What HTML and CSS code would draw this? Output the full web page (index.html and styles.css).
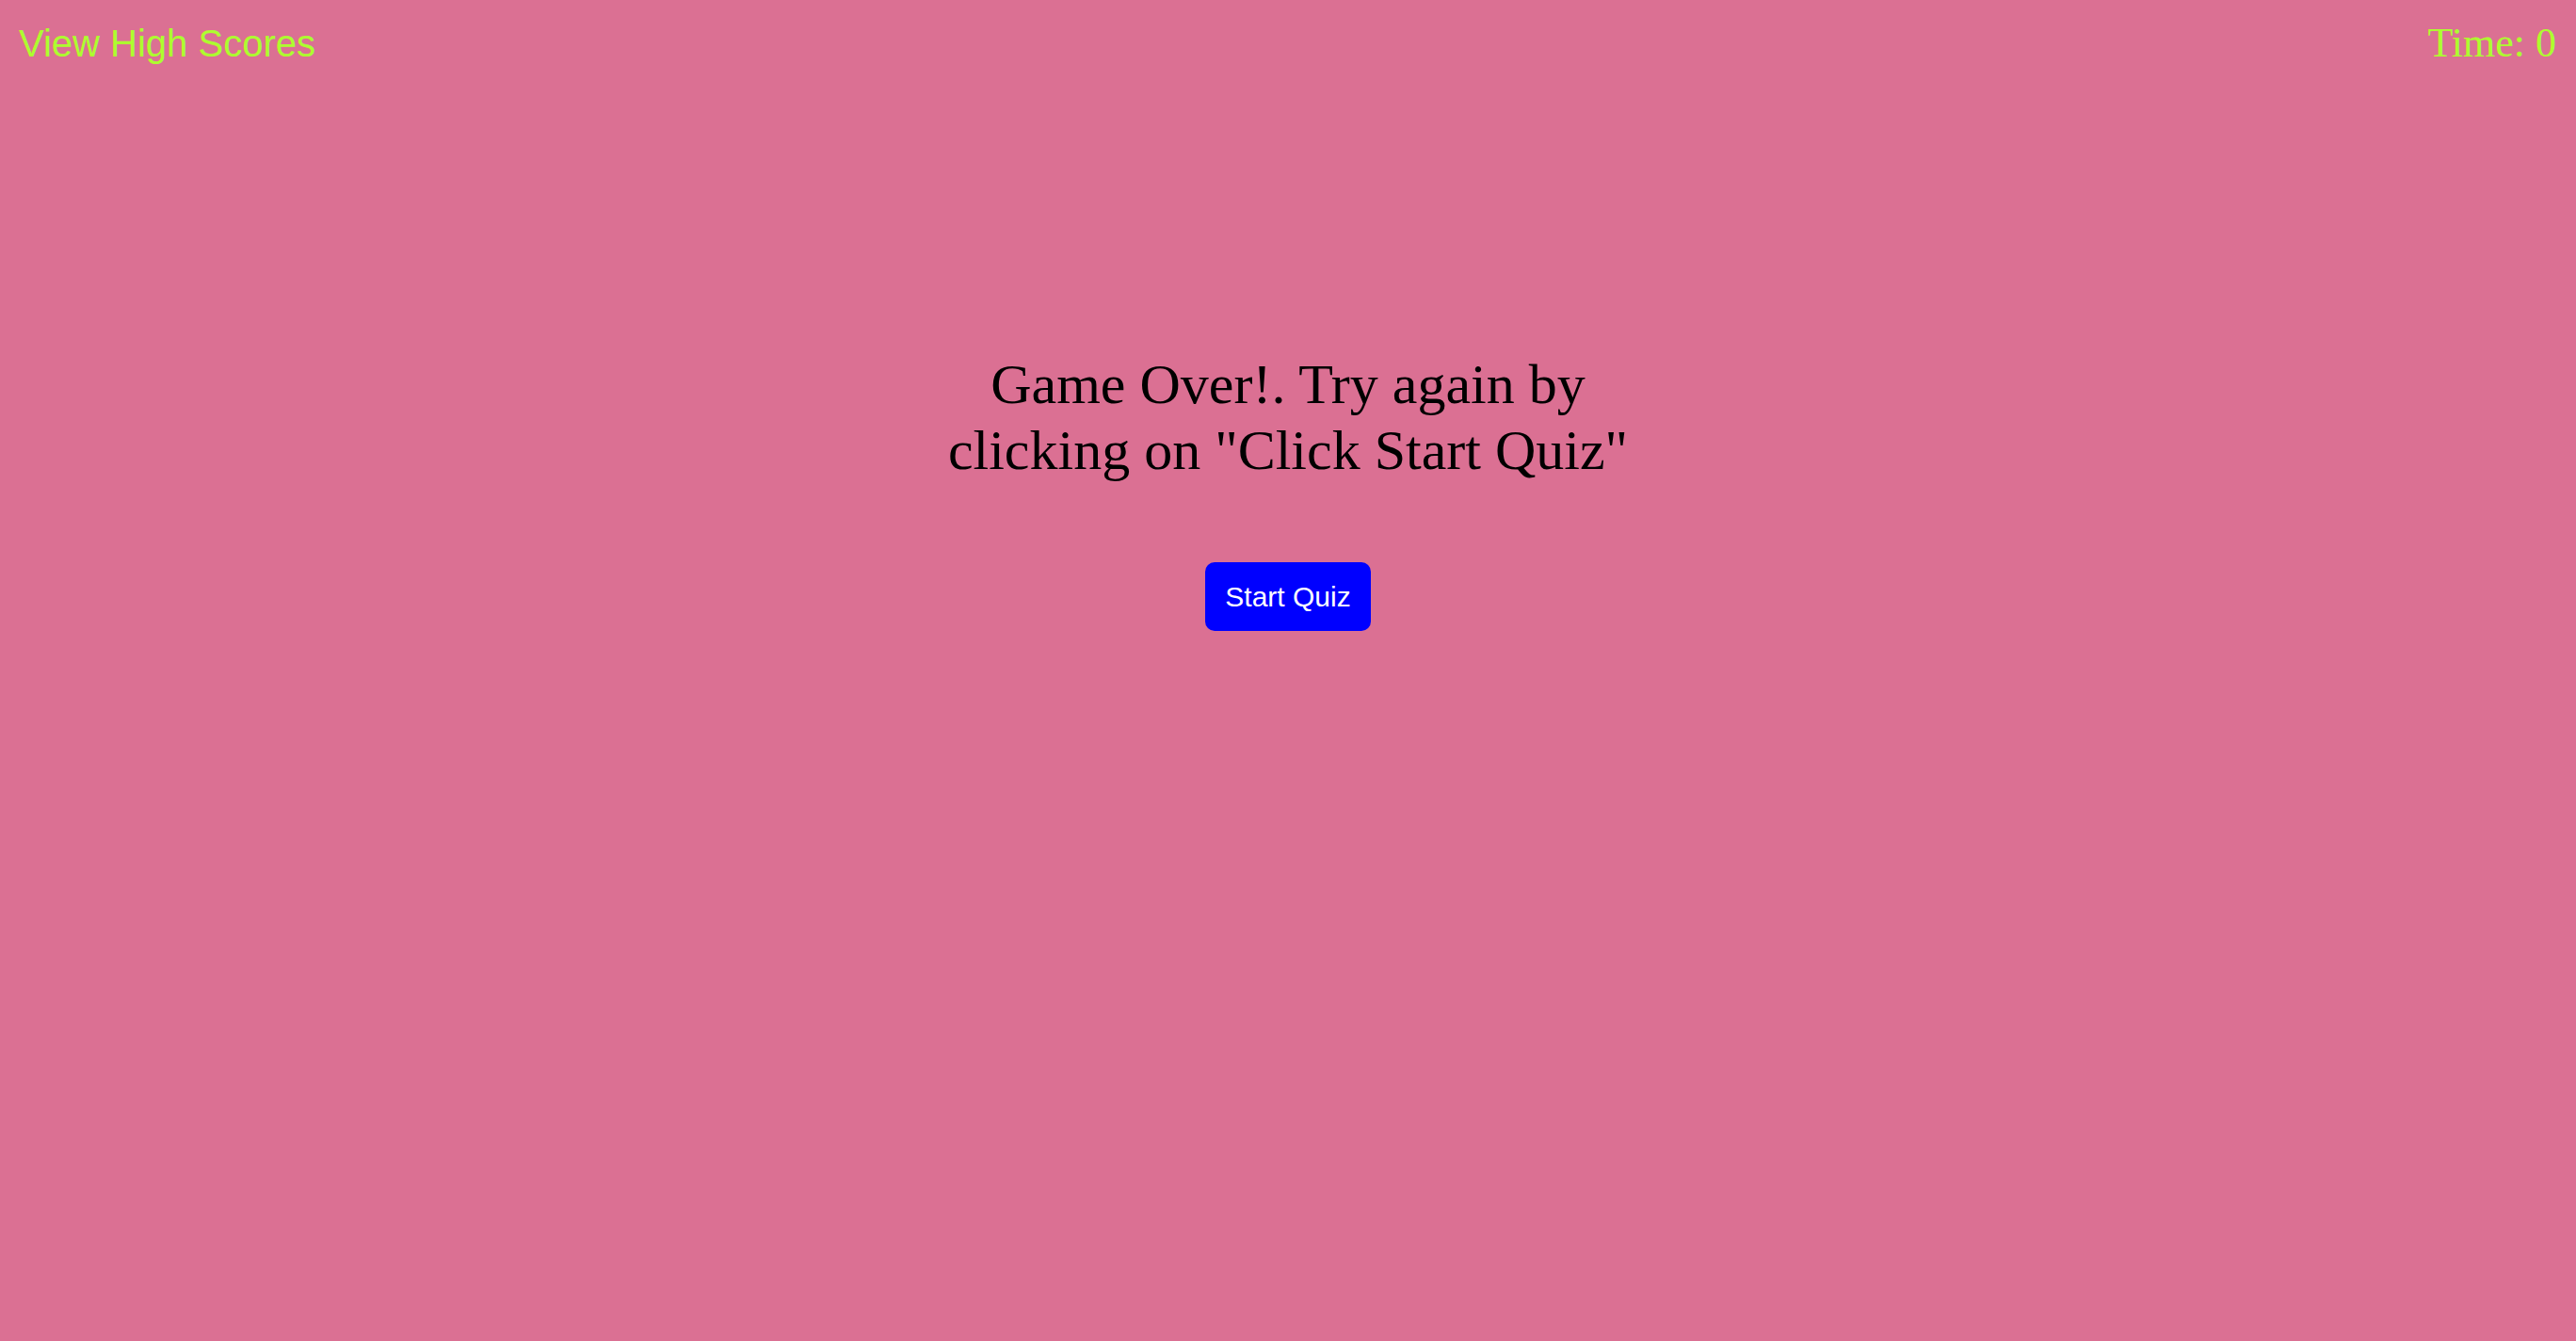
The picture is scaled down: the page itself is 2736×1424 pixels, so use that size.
FILE: index.html
```html
<!DOCTYPE html>
<html lang="en">
<head>
<meta charset="utf-8">
<title>Code Quiz</title>
<link rel="stylesheet" href="styles.css">
</head>
<body>
<header class="top-bar">
  <a class="high-scores" href="#">View High Scores</a>
  <div class="timer">Time: 0</div>
</header>
<main class="quiz">
  <h1 class="message">Game Over!. Try again by clicking on "Click Start Quiz"</h1>
  <button class="start-btn" type="button">Start Quiz</button>
</main>
</body>
</html>
```

FILE: styles.css
```css
html, body {
  margin: 0;
  padding: 0;
}

body {
  background: #db7093;
  min-height: 100vh;
  font-family: "Liberation Serif", "Times New Roman", serif;
}

.top-bar {
  display: flex;
  justify-content: space-between;
  align-items: baseline;
  padding: 23px 21px 0 20px;
}

.high-scores {
  font-family: "Liberation Sans", Arial, sans-serif;
  font-size: 40px;
  line-height: 45px;
  color: #adff2f;
  text-decoration: none;
}

.timer {
  font-family: "Liberation Serif", "Times New Roman", serif;
  font-size: 44px;
  line-height: 45px;
  color: #adff2f;
}

.quiz {
  display: flex;
  flex-direction: column;
  align-items: center;
  margin-top: 304px;
}

.message {
  width: 760px;
  margin: 0;
  text-align: center;
  font-weight: normal;
  font-size: 60px;
  line-height: 70px;
  color: #000;
}

.start-btn {
  margin-top: 84px;
  padding: 19px 21px;
  border: none;
  border-radius: 10px;
  background: #0000ff;
  color: #fff;
  font-family: "Liberation Sans", Arial, sans-serif;
  font-size: 30px;
  line-height: 35px;
  cursor: pointer;
}
```
